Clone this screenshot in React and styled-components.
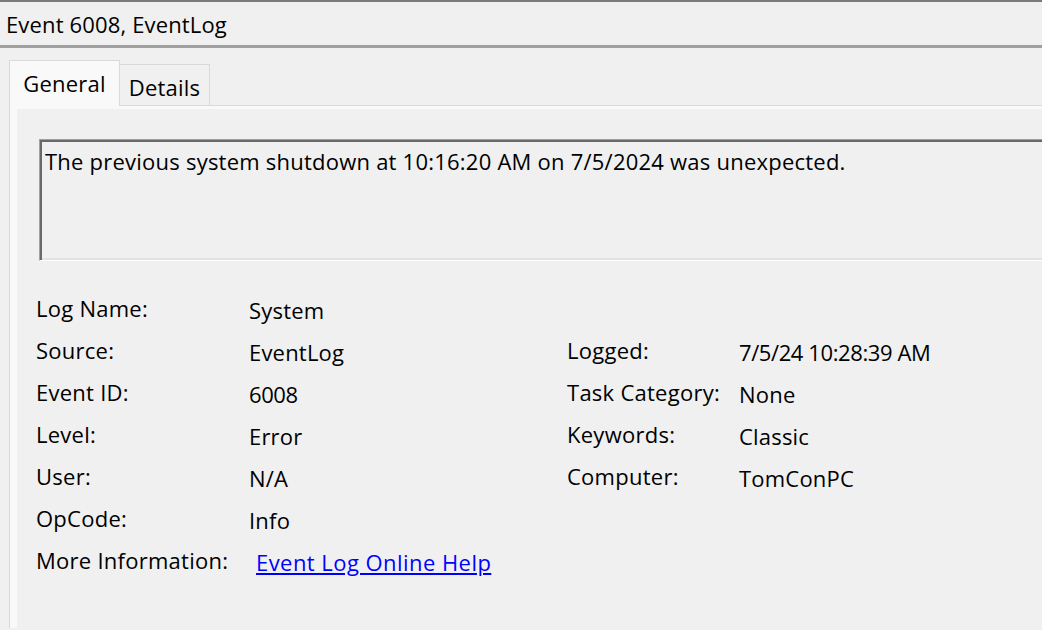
import React from "react";
import styled, { createGlobalStyle } from "styled-components";

const GlobalStyle = createGlobalStyle`
  html, body {
    margin: 0;
    padding: 0;
    background: #f0f0f0;
    overflow: hidden;
  }
  body {
    font-family: "Segoe UI", "Open Sans", "Noto Sans", sans-serif;
    color: #000;
    letter-spacing: 0.2px;
  }
`;

const Window = styled.div`
  width: 1042px;
  height: 630px;
  overflow: hidden;
  background: #f0f0f0;
  border-top: 2px solid #7a7a7a;
  box-sizing: border-box;
`;

const TitleBar = styled.div`
  height: 43px;
  display: flex;
  align-items: center;
  padding-left: 6px;
  font-size: 22px;
  letter-spacing: 0.15px;
  border-bottom: 3px solid #a0a0a0;
`;

const Body = styled.div`
  padding: 13px 0 0 9px;
`;

const TabStrip = styled.div`
  display: flex;
  align-items: flex-end;
  height: 44px;
`;

const Tab = styled.div`
  box-sizing: border-box;
  display: flex;
  align-items: center;
  justify-content: center;
  font-size: 22px;
  border: 1px solid #d9d9d9;
  border-bottom: none;
  width: ${(p) => (p.$active ? "111px" : "90px")};
  height: ${(p) => (p.$active ? "46px" : "41px")};
  background: ${(p) => (p.$active ? "#f9f9f9" : "#f0f0f0")};
  border-left: ${(p) => (p.$active ? "1px solid #d9d9d9" : "none")};
  margin-bottom: ${(p) => (p.$active ? "-1px" : "0")};
  position: relative;
  z-index: ${(p) => (p.$active ? 1 : 0)};
  padding-bottom: ${(p) => (p.$active ? "2px" : "0")};
  padding-top: ${(p) => (p.$active ? "0" : "3px")};
`;

const Panel = styled.div`
  border-top: 1px solid #d9d9d9;
  border-left: 1px solid #d9d9d9;
  background: #f9f9f9;
  padding: 3px 0 0 7px;
`;

const Inner = styled.div`
  background: #f0f0f0;
  height: 519px;
  padding: 30px 0 0 19px;
  box-sizing: border-box;
`;

const MessageBox = styled.div`
  box-sizing: border-box;
  width: 1100px;
  height: 122px;
  margin-left: 3px;
  border: 1px solid;
  border-color: #a0a0a0 #ffffff #ffffff #a0a0a0;
  box-shadow: inset 2px 2px 0 #696969, inset -2px -2px 0 #e3e3e3;
  padding: 7px 0 0 5px;
  font-size: 22px;
  line-height: 28px;
  letter-spacing: 0.23px;
`;

const Fields = styled.div`
  display: grid;
  grid-template-columns: 213px 318px 172px auto;
  grid-auto-rows: 42px;
  margin-top: 28px;
  font-size: 22px;
`;

const Label = styled.div`
  display: flex;
  align-items: center;
  padding-bottom: 4px;
  white-space: nowrap;
  letter-spacing: 0.26px;
`;

const Value = styled.div`
  display: flex;
  align-items: center;
  white-space: nowrap;
  padding-left: ${(p) => (p.$indent ? "7px" : "0")};
  letter-spacing: ${(p) => (p.$numeric ? "-0.4px" : "0.2px")};
`;

const Link = styled.a`
  color: #0000ff;
  text-decoration: underline;
  text-decoration-thickness: 2px;
  text-underline-offset: 2px;
  letter-spacing: 0.45px;
  cursor: pointer;
`;

const rows = [
  ["Log Name:", "System", "", ""],
  ["Source:", "EventLog", "Logged:", "7/5/24 10:28:39 AM"],
  ["Event ID:", "6008", "Task Category:", "None"],
  ["Level:", "Error", "Keywords:", "Classic"],
  ["User:", "N/A", "Computer:", "TomConPC"],
  ["OpCode:", "Info", "", ""],
];

const isNumeric = (s) => /\d/.test(s);

export default function App() {
  return (
    <>
      <GlobalStyle />
      <Window>
        <TitleBar>Event 6008, EventLog</TitleBar>
        <Body>
          <TabStrip>
            <Tab $active>General</Tab>
            <Tab>Details</Tab>
          </TabStrip>
          <Panel>
            <Inner>
              <MessageBox>
                The previous system shutdown at 10:16:20 AM on 7/5/2024 was
                unexpected.
              </MessageBox>
              <Fields>
                {rows.map((r, i) => (
                  <React.Fragment key={i}>
                    <Label>{r[0]}</Label>
                    <Value $numeric={isNumeric(r[1])}>{r[1]}</Value>
                    <Label>{r[2]}</Label>
                    <Value $numeric={isNumeric(r[3])}>{r[3]}</Value>
                  </React.Fragment>
                ))}
                <Label>More Information:</Label>
                <Value $indent>
                  <Link>Event Log Online Help</Link>
                </Value>
              </Fields>
            </Inner>
          </Panel>
        </Body>
      </Window>
    </>
  );
}
